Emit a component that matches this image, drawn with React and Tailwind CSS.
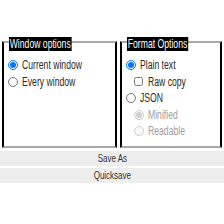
import React from 'react';

function Txt({ children }) {
  return <span className="inline-block origin-left scale-x-[0.72] whitespace-nowrap">{children}</span>;
}

function Radio({ label, checked, disabled, indent }) {
  return (
    <label className={`flex items-center h-[16.5px] ${indent ? 'pl-[9px]' : 'pl-[1px]'} ${disabled ? 'text-[#a0a0a0]' : 'text-[#2a2a2a]'}`}>
      <input type="radio" defaultChecked={checked} disabled={disabled} className="w-[10px] h-[10px] mr-[4px] accent-[#0075ff]" />
      <Txt>{label}</Txt>
    </label>
  );
}

function Check({ label, indent }) {
  return (
    <label className={`flex items-center h-[16.5px] text-[#2a2a2a] ${indent ? 'pl-[9px]' : 'pl-[1px]'}`}>
      <input type="checkbox" className="w-[9px] h-[9px] mr-[5px]" />
      <Txt>{label}</Txt>
    </label>
  );
}

function Box({ title, width, legendW, children }) {
  return (
    <fieldset
      className={`${width} h-[113px] border-x-2 border-x-black border-y-2 border-y-[#a8a8a8] px-[3px] pt-[8px]`}
    >
      <legend className={`${legendW} h-[14px] ml-[2px] overflow-visible`}>
        <span className="inline-block origin-left scale-x-[0.72] whitespace-nowrap bg-black text-white px-[1px] leading-[14px]">{title}</span>
      </legend>
      {children}
    </fieldset>
  );
}

export default function App() {
  return (
    <div className="w-[224px] h-[224px] bg-white text-[12px] pt-[35px]" style={{ fontFamily: '"Liberation Sans", Arial, sans-serif' }}>
      <div className="flex gap-[3px] pl-[2px]">
        <Box title="Window options" width="w-[115px]" legendW="w-[62px]">
          <Radio label="Current window" checked />
          <Radio label="Every window" />
        </Box>
        <Box title="Format Options" width="w-[102px]" legendW="w-[58px]">
          <Radio label="Plain text" checked />
          <Check label="Raw copy" indent />
          <Radio label="JSON" />
          <Radio label="Minified" checked disabled indent />
          <Radio label="Readable" disabled indent />
        </Box>
      </div>
      <div className="flex flex-col gap-[2px] mt-[3px] text-[10px] text-[#333]">
        <button className="h-[15px] bg-[#ededed] leading-[15px]"><span className="inline-block scale-x-[0.8]">Save As</span></button>
        <button className="h-[15px] bg-[#ededed] leading-[15px]"><span className="inline-block scale-x-[0.8]">Quicksave</span></button>
      </div>
    </div>
  );
}
